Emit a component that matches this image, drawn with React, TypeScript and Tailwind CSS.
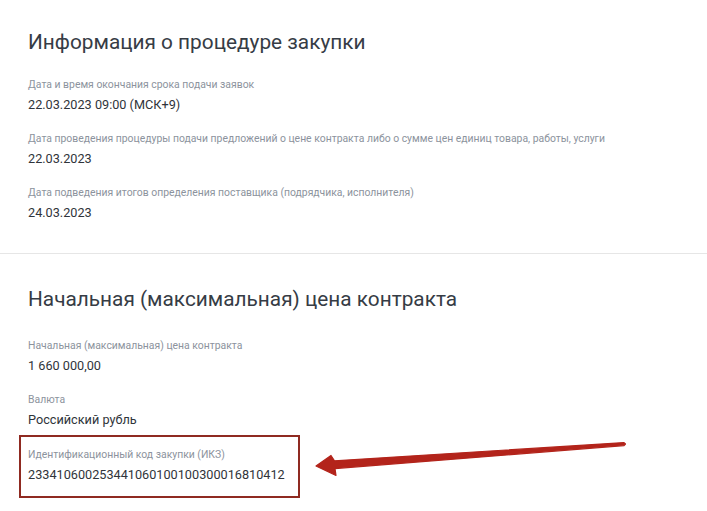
import React from 'react';

interface FieldProps {
  label: string;
  value: string;
}

function Field({ label, value }: FieldProps) {
  return (
    <div className="flex flex-col gap-[3px]">
      <div className="text-[10.4px] leading-[15px] text-[#8c939d]">{label}</div>
      <div className="text-[12.7px] leading-[19px] text-[#2f343a]">{value}</div>
    </div>
  );
}

export default function App() {
  return (
    <div
      className="relative w-[707px] h-[511px] overflow-hidden bg-white"
      style={{ fontFamily: 'Roboto, "Noto Sans", sans-serif' }}
    >
      {/* Procedure info */}
      <section className="px-[28px] pt-[29px] pb-[31px]">
        <h2 className="text-[20.8px] leading-[26px] text-[#363c45]">Информация о процедуре закупки</h2>
        <div className="mt-[22px] flex flex-col gap-[17px]">
          <Field label="Дата и время окончания срока подачи заявок" value="22.03.2023 09:00 (МСК+9)" />
          <Field
            label="Дата проведения процедуры подачи предложений о цене контракта либо о сумме цен единиц товара, работы, услуги"
            value="22.03.2023"
          />
          <Field
            label="Дата подведения итогов определения поставщика (подрядчика, исполнителя)"
            value="24.03.2023"
          />
        </div>
      </section>

      <div className="h-px bg-[#e6e6e6]" />

      {/* Price */}
      <section className="px-[28px] pt-[32px]">
        <h2 className="text-[20.8px] leading-[26px] text-[#363c45]">Начальная (максимальная) цена контракта</h2>
        <div className="mt-[26px] flex flex-col">
          <Field label="Начальная (максимальная) цена контракта" value="1 660 000,00" />
          <div className="mt-[17px]">
            <Field label="Валюта" value="Российский рубль" />
          </div>
          <div className="-ml-[9px] mt-[6px] w-[281px] border-2 border-[#8f2a21] pl-[7px] pt-[10px] pb-[12px]">
            <Field label="Идентификационный код закупки (ИКЗ)" value="233410600253441060100100300016810412" />
          </div>
        </div>
      </section>

      {/* Arrow overlay */}
      <svg className="absolute left-0 top-0 pointer-events-none" width="707" height="511" viewBox="0 0 707 511">
        <polygon
          points="624,442.6 625.5,444 624,445.6 335,468.6 336,475.5 316,466 331,455.5 334.5,460.8"
          fill="#b3241b"
          stroke="#b3241b"
          strokeWidth="1.2"
          strokeLinejoin="round"
        />
      </svg>
    </div>
  );
}
